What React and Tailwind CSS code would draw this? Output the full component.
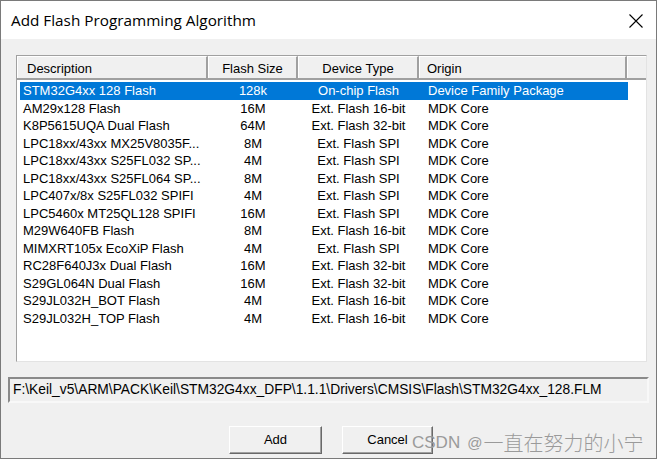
import React from "react";

const rows = [
  ["STM32G4xx 128 Flash", "128k", "On-chip Flash", "Device Family Package"],
  ["AM29x128 Flash", "16M", "Ext. Flash 16-bit", "MDK Core"],
  ["K8P5615UQA Dual Flash", "64M", "Ext. Flash 32-bit", "MDK Core"],
  ["LPC18xx/43xx MX25V8035F...", "8M", "Ext. Flash SPI", "MDK Core"],
  ["LPC18xx/43xx S25FL032 SP...", "4M", "Ext. Flash SPI", "MDK Core"],
  ["LPC18xx/43xx S25FL064 SP...", "8M", "Ext. Flash SPI", "MDK Core"],
  ["LPC407x/8x S25FL032 SPIFI", "4M", "Ext. Flash SPI", "MDK Core"],
  ["LPC5460x MT25QL128 SPIFI", "16M", "Ext. Flash SPI", "MDK Core"],
  ["M29W640FB Flash", "8M", "Ext. Flash 16-bit", "MDK Core"],
  ["MIMXRT105x EcoXiP Flash", "4M", "Ext. Flash SPI", "MDK Core"],
  ["RC28F640J3x Dual Flash", "16M", "Ext. Flash 32-bit", "MDK Core"],
  ["S29GL064N Dual Flash", "16M", "Ext. Flash 32-bit", "MDK Core"],
  ["S29JL032H_BOT Flash", "4M", "Ext. Flash 16-bit", "MDK Core"],
  ["S29JL032H_TOP Flash", "4M", "Ext. Flash 16-bit", "MDK Core"],
];

const sans = "font-['Liberation_Sans',Arial,sans-serif]";

export default function App() {
  return (
    <div className="relative w-[657px] h-[459px] bg-[#f0f0f0] border border-[#7a7a7a] overflow-hidden text-black">
      {/* Title bar */}
      <div className="h-[38px] bg-white flex items-center justify-between pl-[10px] pr-[13px]">
        <span className="font-['Open_Sans','Noto_Sans',sans-serif] text-[15.3px] leading-none pt-[1px]">
          Add Flash Programming Algorithm
        </span>
        <svg width="14" height="14" viewBox="0 0 14 14" className="mt-[1px]">
          <path d="M0.5 0.5 L13.5 13.5 M13.5 0.5 L0.5 13.5" stroke="#000" strokeWidth="1.1" fill="none" />
        </svg>
      </div>

      <div className={`flex flex-col ${sans} text-[13px]`}>
        {/* List box */}
        <div className="ml-[15px] mt-[16px] w-[631px] h-[307px] border border-[#a0a0a0] border-r-[#e3e3e3] border-b-[#e3e3e3] bg-white flex flex-col">
          {/* Header */}
          <div className="flex h-[24px] bg-[#f0f0f0] border-b-2 border-[#a0a0a0] text-[13px]">
            <div className="w-[191px] border-l border-t border-white border-r-2 border-r-[#a0a0a0] pl-[9px] pt-[2px] flex items-center">
              Description
            </div>
            <div className="w-[90px] border-l border-t border-white border-r-2 border-r-[#a0a0a0] pt-[2px] flex items-center justify-center">
              Flash Size
            </div>
            <div className="w-[121px] border-l border-t border-white border-r-2 border-r-[#a0a0a0] pt-[2px] flex items-center justify-center">
              Device Type
            </div>
            <div className="w-[208px] border-l border-t border-white border-r-2 border-r-[#a0a0a0] pl-[7px] pt-[2px] flex items-center">
              Origin
            </div>
            <div className="flex-1 border-l border-t border-white" />
          </div>
          {/* Rows */}
          <div className="pt-[2px] pl-[3px] flex flex-col">
            {rows.map((r, i) => (
              <div
                key={i}
                className={`flex h-[17.5px] w-[608px] items-center whitespace-nowrap ${
                  i === 0 ? "bg-[#0078d7] text-white" : ""
                }`}
              >
                <div className="w-[188px] pl-[3px] overflow-hidden">{r[0]}</div>
                <div className="w-[90px] text-center">{r[1]}</div>
                <div className="w-[121px] text-center">{r[2]}</div>
                <div className="flex-1 pl-[9px]">{r[3]}</div>
              </div>
            ))}
          </div>
        </div>

        {/* Path field */}
        <div className="ml-[7px] mt-[15px] w-[641px] h-[26px] border-2 border-t-[#8a8a8a] border-l-[#8a8a8a] border-r-[#f8f8f8] border-b-[#f8f8f8] bg-[#f0f0f0] flex items-center pl-[3px] whitespace-nowrap text-[13.8px]">
          F:\Keil_v5\ARM\PACK\Keil\STM32G4xx_DFP\1.1.1\Drivers\CMSIS\Flash\STM32G4xx_128.FLM
        </div>

        {/* Buttons */}
        <div className="flex gap-[20px] pl-[228px] mt-[23px]">
          <div className="w-[93px] h-[28px] border border-t-white border-l-white border-r-[#696969] border-b-[#696969] bg-[#f0f0f0] flex items-center justify-center shadow-[inset_-1px_-1px_0_#a0a0a0]">
            Add
          </div>
          <div className="w-[91px] h-[28px] border border-t-white border-l-white border-r-[#696969] border-b-[#696969] bg-[#f0f0f0] flex items-center justify-center shadow-[inset_-1px_-1px_0_#a0a0a0]">
            Cancel
          </div>
        </div>
      </div>

      {/* Watermark */}
      <div className="absolute left-[411px] top-[427px] flex items-center text-[#9a9a9a] whitespace-nowrap pointer-events-none">
        <span className="font-['Liberation_Sans',Arial,sans-serif] text-[17px]">CSDN</span>
        <span className="ml-[7px] font-['Liberation_Sans',Arial,sans-serif] text-[15px]">@</span>
        <span className="ml-[1px] font-['Noto_Sans_CJK_SC',sans-serif] text-[20px] font-light">一直在努力的小宁</span>
      </div>
    </div>
  );
}
